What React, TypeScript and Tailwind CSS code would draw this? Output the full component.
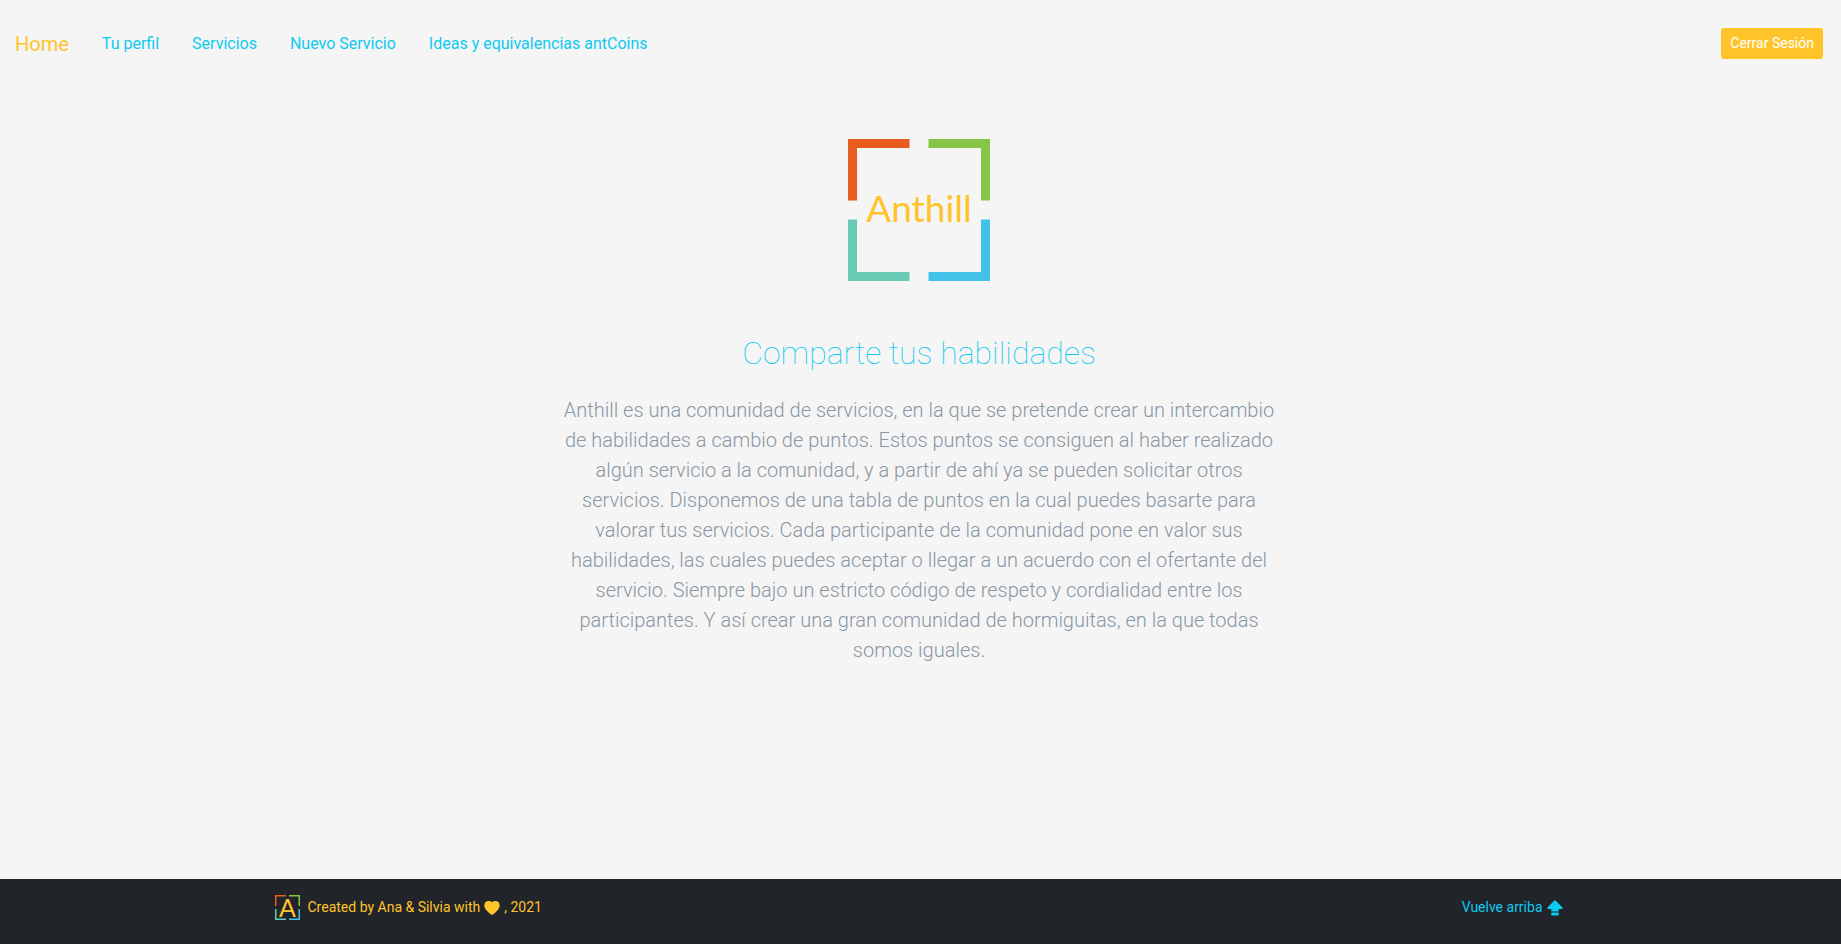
const links = ['Tu perfil', 'Servicios', 'Nuevo Servicio', 'Ideas y equivalencias antCoins'];

const lines = [
  'Anthill es una comunidad de servicios, en la que se pretende crear un intercambio',
  'de habilidades a cambio de puntos. Estos puntos se consiguen al haber realizado',
  'algún servicio a la comunidad, y a partir de ahí ya se pueden solicitar otros',
  'servicios. Disponemos de una tabla de puntos en la cual puedes basarte para',
  'valorar tus servicios. Cada participante de la comunidad pone en valor sus',
  'habilidades, las cuales puedes aceptar o llegar a un acuerdo con el ofertante del',
  'servicio. Siempre bajo un estricto código de respeto y cordialidad entre los',
  'participantes. Y así crear una gran comunidad de hormiguitas, en la que todas',
  'somos iguales.',
];

function Brackets({ size, arm, stroke }: { size: number; arm: number; stroke: number }) {
  const near = stroke / 2;
  const far = size - near;
  const back = size - arm;
  return (
    <g fill="none" strokeWidth={stroke}>
      <path d={`M${arm} ${near}H${near}V${arm}`} stroke="#e85c20" />
      <path d={`M${back} ${near}H${far}V${arm}`} stroke="#87c546" />
      <path d={`M${near} ${back}V${far}H${arm}`} stroke="#68c9b5" />
      <path d={`M${far} ${back}V${far}H${back}`} stroke="#41c2e6" />
    </g>
  );
}

function Logo() {
  return (
    <svg viewBox="0 0 142 142" className="size-[142px]" role="img" aria-label="Anthill">
      <Brackets size={142} arm={61.5} stroke={9} />
      <text x="71" y="83" textAnchor="middle" fill="#ffc42a" className="font-['Lato',sans-serif] text-[37px]">
        Anthill
      </text>
    </svg>
  );
}

function SmallLogo() {
  return (
    <svg viewBox="0 0 25 25" className="size-[25px]" role="img" aria-label="Anthill">
      <Brackets size={25} arm={11} stroke={1.5} />
      <text x="12.5" y="22" textAnchor="middle" fill="#ffc42a" className="font-['Lato',sans-serif] text-[25px] leading-none">
        A
      </text>
    </svg>
  );
}

function Heart() {
  return (
    <svg viewBox="0 0 16 14" className="h-[14px] w-4" fill="#ffc42a" aria-hidden="true">
      <path d="M8 1.3C9.2 0 10.4 0 11.5 0C14.2 0 15.7 2 15.7 4.3C15.7 7.6 12.8 10.6 9.2 13.3Q8 14.4 6.8 13.3C3.2 10.6 .3 7.6 .3 4.3C.3 2 1.8 0 4.5 0C5.6 0 6.8 0 8 1.3Z" />
    </svg>
  );
}

function ArrowUp() {
  return (
    <svg viewBox="0 0 16 16" className="size-4" fill="#0dcaf0" aria-hidden="true">
      <path d="M7.4 .5a.9 .9 0 0 1 1.200 0L15.500 7.600c.5 .600 .1 1.400 -.700 1.400H11.700V11.600H4.300V9H1.200c-.8 0 -1.200 -.8 -.7 -1.400Z" />
      <rect x="4.3" y="12.600" width="7.400" height="3" rx=".6" />
    </svg>
  );
}

export default function App() {
  return (
    <div className="flex min-h-screen flex-col bg-[#f5f5f5] font-['Roboto',sans-serif]">
      <nav className="flex items-center justify-between pt-7 pr-[18px] pl-[15px]">
        <div className="flex items-center gap-[33px] text-[#0dcaf0]">
          <a href="#" className="text-xl text-[#ffc42a]">Home</a>
          {links.map((label) => (
            <a key={label} href="#">{label}</a>
          ))}
        </div>
        <button type="button" className="rounded-[3px] bg-[#ffc42a] px-[9px] py-1 text-sm/[23px] text-white">
          Cerrar Sesión
        </button>
      </nav>

      <main className="flex grow flex-col items-center pt-20 pr-[3px] text-center">
        <Logo />
        <h1 className="mt-12 text-[32px]/[48px] font-thin text-[#0dcaf0]">Comparte tus habilidades</h1>
        <p className="mt-[18px] text-xl/[30px] font-light text-[#8a97a3]">
          {lines.map((line) => (
            <span key={line} className="block">{line} </span>
          ))}
        </p>
      </main>

      <footer className="bg-[#212529]">
        <div className="mx-auto flex h-[65px] max-w-[1320px] items-start justify-between pt-4 pr-[18px] pl-[14px] text-sm/[25px]">
          <div className="flex items-center text-[#ffc42a]">
            <SmallLogo />
            <span className="mr-1 ml-2">Created by Ana &amp; Silvia with</span>
            <Heart />
            <span className="ml-1">, 2021</span>
          </div>
          <a href="#" className="flex items-center gap-1 text-[#0dcaf0]">
            Vuelve arriba
            <ArrowUp />
          </a>
        </div>
      </footer>
    </div>
  );
}
